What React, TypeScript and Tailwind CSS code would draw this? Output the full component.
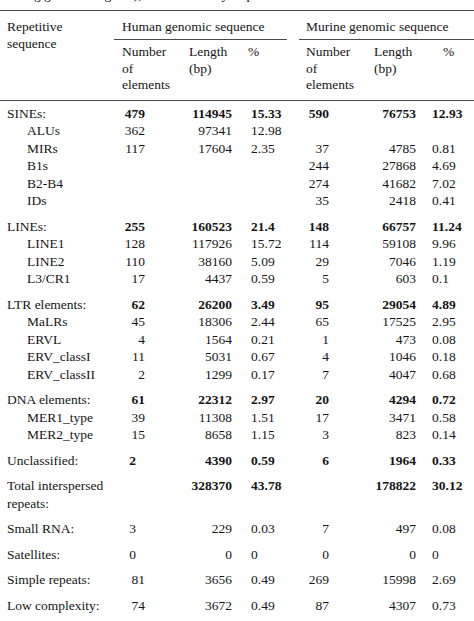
type Cells = [string, string, string];

type Row = {
  label: string;
  sub?: boolean;
  bold?: boolean;
  h?: Cells;
  m?: Cells;
  shift?: boolean;
};

const groups: Row[][] = [
  [
    { label: "SINEs:", bold: true, h: ["479", "114945", "15.33"], m: ["590", "76753", "12.93"] },
    { label: "ALUs", sub: true, h: ["362", "97341", "12.98"] },
    { label: "MIRs", sub: true, h: ["117", "17604", "2.35"], m: ["37", "4785", "0.81"] },
    { label: "B1s", sub: true, m: ["244", "27868", "4.69"] },
    { label: "B2-B4", sub: true, m: ["274", "41682", "7.02"] },
    { label: "IDs", sub: true, m: ["35", "2418", "0.41"] },
  ],
  [
    { label: "LINEs:", bold: true, h: ["255", "160523", "21.4"], m: ["148", "66757", "11.24"] },
    { label: "LINE1", sub: true, h: ["128", "117926", "15.72"], m: ["114", "59108", "9.96"] },
    { label: "LINE2", sub: true, h: ["110", "38160", "5.09"], m: ["29", "7046", "1.19"] },
    { label: "L3/CR1", sub: true, h: ["17", "4437", "0.59"], m: ["5", "603", "0.1"] },
  ],
  [
    { label: "LTR elements:", bold: true, h: ["62", "26200", "3.49"], m: ["95", "29054", "4.89"] },
    { label: "MaLRs", sub: true, h: ["45", "18306", "2.44"], m: ["65", "17525", "2.95"] },
    { label: "ERVL", sub: true, h: ["4", "1564", "0.21"], m: ["1", "473", "0.08"] },
    { label: "ERV_classI", sub: true, h: ["11", "5031", "0.67"], m: ["4", "1046", "0.18"] },
    { label: "ERV_classII", sub: true, h: ["2", "1299", "0.17"], m: ["7", "4047", "0.68"] },
  ],
  [
    { label: "DNA elements:", bold: true, h: ["61", "22312", "2.97"], m: ["20", "4294", "0.72"] },
    { label: "MER1_type", sub: true, h: ["39", "11308", "1.51"], m: ["17", "3471", "0.58"] },
    { label: "MER2_type", sub: true, h: ["15", "8658", "1.15"], m: ["3", "823", "0.14"] },
  ],
  [{ label: "Unclassified:", bold: true, shift: true, h: ["2", "4390", "0.59"], m: ["6", "1964", "0.33"] }],
  [
    { label: "Total interspersed repeats:", bold: true, h: ["", "328370", "43.78"], m: ["", "178822", "30.12"] },
  ],
  [{ label: "Small RNA:", shift: true, h: ["3", "229", "0.03"], m: ["7", "497", "0.08"] }],
  [{ label: "Satellites:", shift: true, h: ["0", "0", "0"], m: ["0", "0", "0"] }],
  [{ label: "Simple repeats:", h: ["81", "3656", "0.49"], m: ["269", "15998", "2.69"] }],
  [{ label: "Low complexity:", h: ["74", "3672", "0.49"], m: ["87", "4307", "0.73"] }],
];

const grid = "grid grid-cols-[114px_70px_59px_56px_70px_59px_46px]";

function DataRow({ row }: { row: Row }) {
  const h = row.h ?? ["", "", ""];
  const m = row.m ?? ["", "", ""];
  const num = row.bold ? "font-bold" : "";
  return (
    <div className={`${grid} items-start leading-[17.5px]`}>
      <div className={row.sub ? "pl-[27px]" : "pl-[7px]"}>{row.label}</div>
      <div className={`text-right ${row.shift ? "pr-[48px]" : "pr-[39px]"} ${num}`}>{h[0]}</div>
      <div className={`text-right pr-[11px] ${num}`}>{h[1]}</div>
      <div className={`pl-[8px] ${num}`}>{h[2]}</div>
      <div className={`text-right pr-[40px] ${num}`}>{m[0]}</div>
      <div className={`text-right pr-[12px] ${num}`}>{m[1]}</div>
      <div className={`pl-[4px] ${num}`}>{m[2]}</div>
    </div>
  );
}

export default function App() {
  return (
    <div
      className="w-[474px] h-[621px] overflow-hidden bg-white text-[#151515] text-[13.5px]"
      style={{ fontFamily: '"Liberation Serif", "Times New Roman", serif' }}
    >
      {/* caption, mostly cut off by the crop */}
      <div className="h-[10px] overflow-hidden">
        <p className="mt-[-13px] leading-4 pl-[4px] whitespace-nowrap">
          among genomic regions), as identified by RepeatMasker
        </p>
      </div>

      {/* header */}
      <div className={`${grid} border-t border-b border-[#4a4a4a] leading-[16.5px] pt-[8px] pb-[6px]`}>
        <div className="row-span-2 pl-[7px]">
          Repetitive
          <br />
          sequence
        </div>
        <div className="col-span-3">
          <div className="mr-[12px] pl-[8px] pb-[3px] border-b border-[#4a4a4a]">Human genomic sequence</div>
        </div>
        <div className="col-span-3">
          <div className="pl-[7px] pb-[3px] border-b border-[#4a4a4a]">Murine genomic sequence</div>
        </div>
        <div className="pl-[8px] pt-[4.5px]">
          Number
          <br />
          of
          <br />
          elements
        </div>
        <div className="pl-[5px] pt-[4.5px]">
          Length
          <br />
          (bp)
        </div>
        <div className="pl-[5px] pt-[4.5px]">%</div>
        <div className="pl-[7px] pt-[4.5px]">
          Number
          <br />
          of
          <br />
          elements
        </div>
        <div className="pl-[5px] pt-[4.5px]">
          Length
          <br />
          (bp)
        </div>
        <div className="pl-[15px] pt-[4.5px]">%</div>
      </div>

      {/* body */}
      <div className="flex flex-col">
        {groups.map((g, i) => (
          <div key={i} className="py-[4px]">
            {g.map((r) => (
              <DataRow key={r.label} row={r} />
            ))}
          </div>
        ))}
      </div>
    </div>
  );
}
